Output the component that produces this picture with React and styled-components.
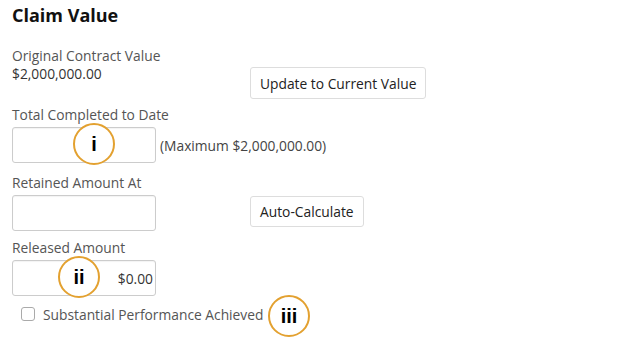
import React from 'react'
import styled, { createGlobalStyle } from 'styled-components'

const GlobalStyle = createGlobalStyle`
    html, body {
        margin: 0;
        padding: 0;
        background: #ffffff;
    }
    body {
        font-family: "Open Sans", "Noto Sans", Arial, sans-serif;
        color: #333;
    }
`

function App() {
    return (
        <Page>
            <GlobalStyle />
            <Title>Claim Value</Title>

            <Row top={20}>
                <div>
                    <Label flush>Original Contract Value</Label>
                    <Value>$2,000,000.00</Value>
                </div>
                <Button offset={20}>Update to Current Value</Button>
            </Row>

            <Field top={7}>
                <Label>Total Completed to Date</Label>
                <InputLine>
                    <Input />
                    <Hint>(Maximum $2,000,000.00)</Hint>
                </InputLine>
            </Field>

            <Row top={11}>
                <Field>
                    <Label>Retained Amount At</Label>
                    <Input />
                </Field>
                <Button offset={22} short>Auto-Calculate</Button>
            </Row>

            <Field top={8}>
                <Label>Released Amount</Label>
                <Input align="right">$0.00</Input>
            </Field>

            <CheckRow>
                <Box />
                <CheckLabel>Substantial Performance Achieved</CheckLabel>
            </CheckRow>

            <Marker x={73} y={123}>i</Marker>
            <Marker x={58} y={256}>ii</Marker>
            <Marker x={268} y={295}>iii</Marker>
        </Page>
    )
}

export default App

const Page = styled.div`
    position: relative;
    width: 624px;
    height: 359px;
    padding: 0 12px;
    box-sizing: border-box;
    overflow: hidden;
`

const Title = styled.h2`
    margin: 0;
    padding-top: 3px;
    font-size: 18px;
    line-height: 24px;
    font-weight: 700;
    color: #111;
`

const Row = styled.div`
    display: grid;
    grid-template-columns: 238px auto;
    align-items: start;
    justify-items: start;
    margin-top: ${p => p.top || 0}px;
`

const Field = styled.div`
    display: flex;
    flex-direction: column;
    margin-top: ${p => p.top || 0}px;
`

const Label = styled.div`
    font-size: 13.8px;
    line-height: 18px;
    color: #555;
    margin-bottom: ${p => (p.flush ? 0 : 3)}px;
`

const Value = styled.div`
    font-size: 13.8px;
    line-height: 18px;
    color: #333;
`

const Button = styled.button`
    margin-top: ${p => p.offset || 0}px;
    height: ${p => (p.short ? 31 : 32)}px;
    padding: 0 9px;
    background: #fff;
    border: 1px solid #ddd;
    border-radius: 3px;
    font-family: inherit;
    font-size: 13.8px;
    color: #222;
`

const InputLine = styled.div`
    display: flex;
    align-items: center;
    gap: 4px;
`

const Input = styled.div`
    width: 144px;
    height: 36px;
    box-sizing: border-box;
    border: 1px solid #ccc;
    border-radius: 3px;
    box-shadow: inset 0 1px 1px rgba(0, 0, 0, 0.05);
    display: flex;
    align-items: center;
    justify-content: ${p => (p.align === 'right' ? 'flex-end' : 'flex-start')};
    padding: 0 2px 0 8px;
    font-size: 13.8px;
    color: #333;
`

const Hint = styled.span`
    font-size: 13.8px;
    color: #444;
`

const CheckRow = styled.div`
    display: flex;
    align-items: center;
    gap: 8px;
    margin-top: 8px;
    padding-left: 9px;
    height: 20px;
`

const Box = styled.span`
    width: 12px;
    height: 12px;
    border: 1px solid #aaa;
    border-radius: 3px;
    background: #fff;
`

const CheckLabel = styled.span`
    font-size: 13.8px;
    color: #555;
`

const Marker = styled.div`
    position: absolute;
    left: ${p => p.x}px;
    top: ${p => p.y}px;
    width: 42px;
    height: 42px;
    box-sizing: border-box;
    border: 2.5px solid #e3a130;
    border-radius: 50%;
    background: #fff;
    display: flex;
    align-items: center;
    justify-content: center;
    font-family: "Liberation Sans", Arial, sans-serif;
    font-weight: 700;
    font-size: 20px;
    color: #000;
`
